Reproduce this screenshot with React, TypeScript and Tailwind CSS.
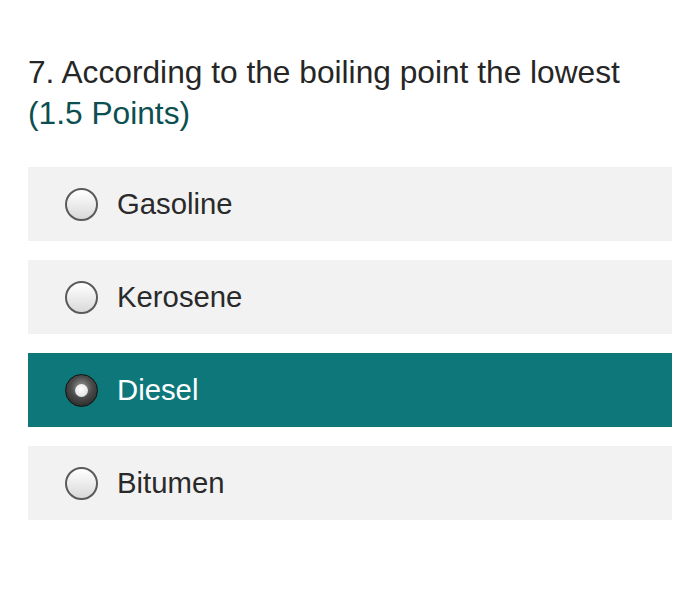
const options = ["Gasoline", "Kerosene", "Diesel", "Bitumen"];
const selected = "Diesel";

function Radio({ checked }: { checked: boolean }) {
  if (checked) {
    return (
      <span className="flex h-[33px] w-[33px] shrink-0 items-center justify-center rounded-full border border-[#111] bg-[radial-gradient(circle_at_50%_40%,#9a9a9a_0%,#4a4a4a_45%,#1b1b1b_100%)]">
        <span className="h-[13px] w-[13px] rounded-full bg-[radial-gradient(circle_at_45%_40%,#ffffff_0%,#e8e8e8_60%,#c9c9c9_100%)]" />
      </span>
    );
  }
  return (
    <span className="h-[33px] w-[33px] shrink-0 rounded-full border-2 border-[#5a5a5a] bg-gradient-to-b from-[#ffffff] to-[#d9d9d9]" />
  );
}

export default function App() {
  return (
    <div className="min-h-[603px] w-[700px] bg-white pt-[52px] font-['Liberation_Sans',Arial,sans-serif]">
      <div className="px-[28px]">
        <h1 className="text-[31.7px] leading-[41px] text-[#262626]">
          7. According to the boiling point the lowest
          <br />
          <span className="text-[#0c4f50]">(1.5 Points)</span>
        </h1>
      </div>
      <div className="mt-[33px] flex flex-col gap-[19px] pl-[28px] pr-[28px]">
        {options.map((opt) => {
          const on = opt === selected;
          return (
            <div
              key={opt}
              className={`flex h-[74px] items-center gap-[19px] pl-[37px] ${
                on ? "bg-[#0d777a] text-white" : "bg-[#f2f2f2] text-[#2a2a2a]"
              }`}
            >
              <Radio checked={on} />
              <span className="text-[29.3px] leading-none">{opt}</span>
            </div>
          );
        })}
      </div>
    </div>
  );
}
